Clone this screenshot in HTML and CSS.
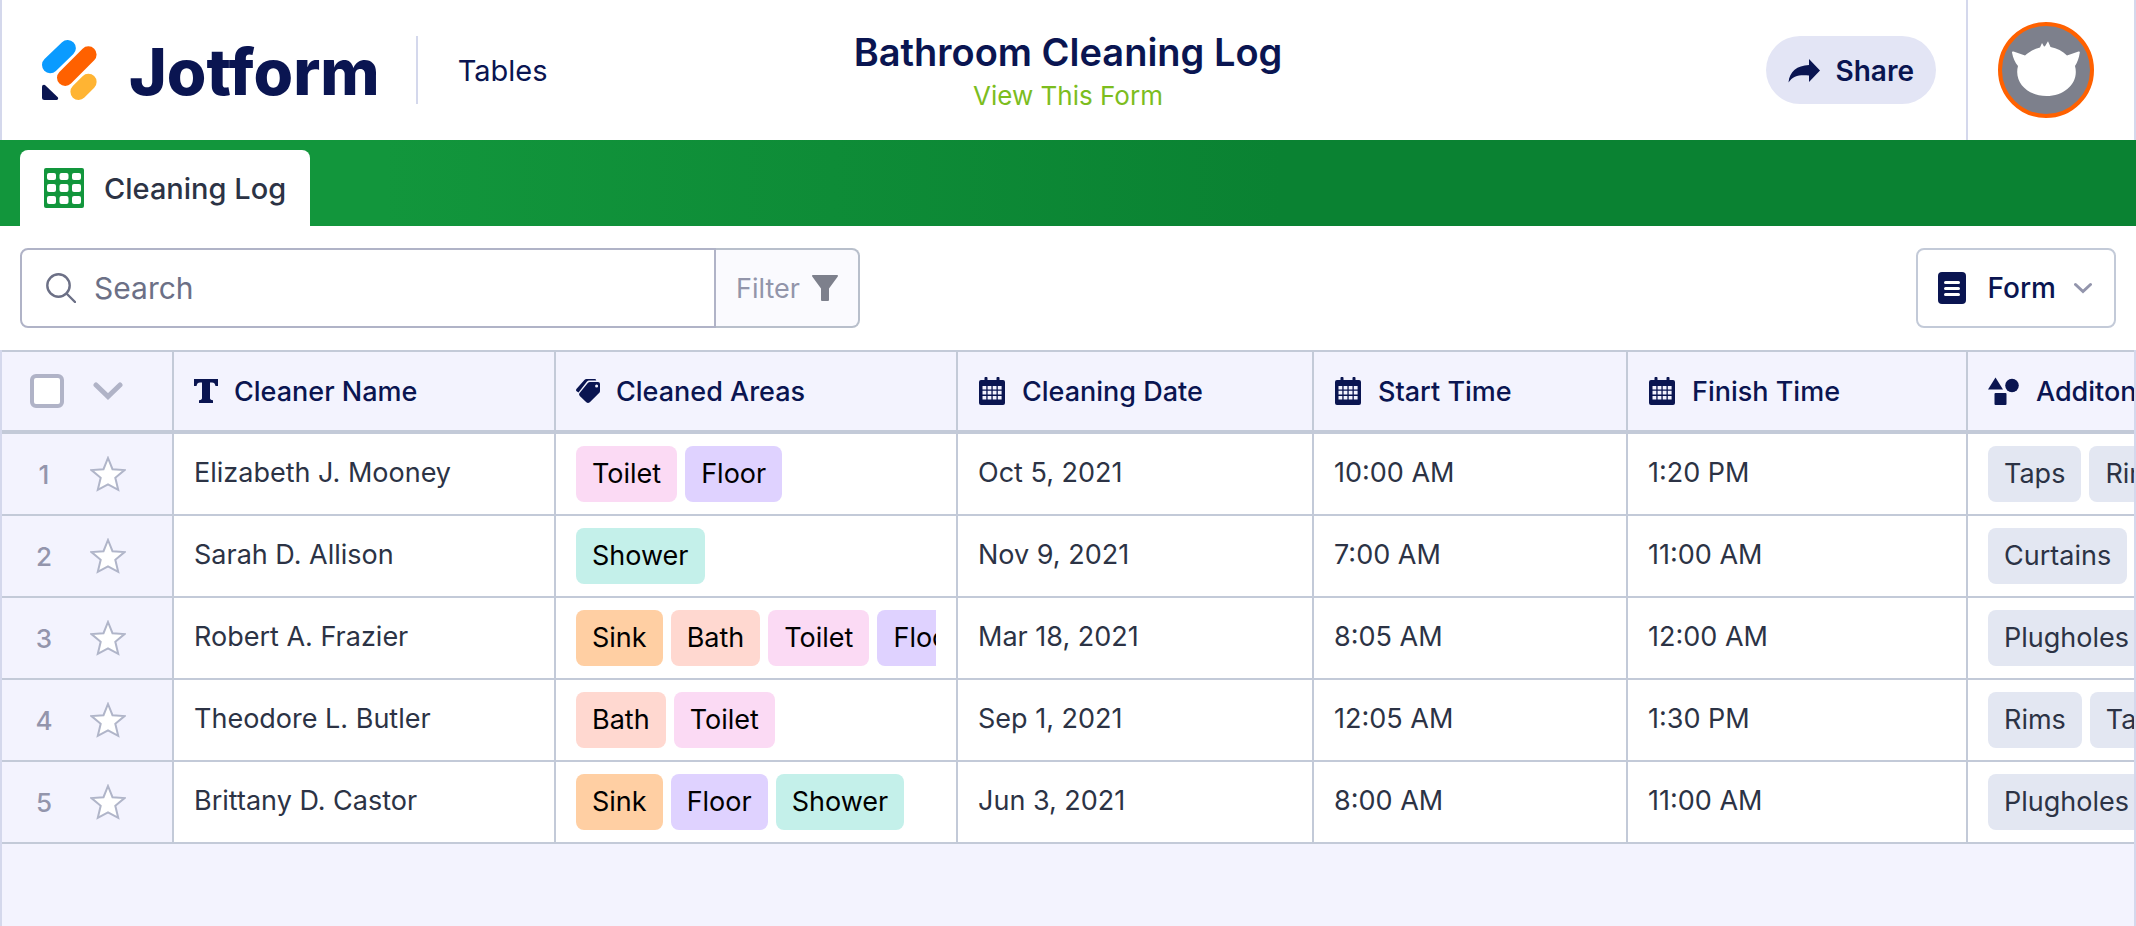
FILE: index.html
```
<!DOCTYPE html>
<html lang="en">
<head>
<meta charset="utf-8">
<meta name="viewport" content="width=device-width, initial-scale=1">
<title>Bathroom Cleaning Log</title>
<link rel="stylesheet" href="styles.css">
</head>
<body>
<svg class="sprite" aria-hidden="true">
  <symbol id="star" viewBox="0 0 36 36"><path d="M18 2l4.500 11.200 12 .9-9.200 7.700 2.900 12L18 28.300 7.800 33.800l2.900-12L1.500 14.100l12-.9z" fill="#fff" stroke="#b0b5c9" stroke-width="2"/></symbol>
  <symbol id="calendar" viewBox="0 0 26 28"><path fill="currentColor" fill-rule="evenodd" d="M5.500 1.200a1.200 1.200 0 0 1 3 0V3h9V1.200a1.200 1.200 0 0 1 3 0V3H24a2 2 0 0 1 2 2v21a2 2 0 0 1-2 2H2a2 2 0 0 1-2-2V5a2 2 0 0 1 2-2h3.500zM3.500 9v3.400h3.800V9zm5.100 0v3.400h3.800V9zm5.100 0v3.400h3.800V9zm5.100 0v3.400h3.800V9zM3.500 13.800v3.800h3.800v-3.800zm5.100 0v3.800h3.800v-3.800zm5.100 0v3.800h3.800v-3.800zm5.100 0v3.800h3.800v-3.800zM3.500 19v3.600h3.800V19zm5.100 0v3.600h3.800V19zm5.100 0v3.600h3.800V19zm5.100 0v3.600h3.800V19z"/></symbol>
</svg>

<header class="topbar">
  <div class="brand">
    <a class="logo" href="#">
      <svg class="logo-mark" viewBox="42 40 55 60" aria-hidden="true">
        <g stroke-width="16.400" stroke-linecap="round">
          <path d="M50.200 65 67.700 48.200" stroke="#0a9bff"/>
          <path d="M65.200 77.800 88.400 54.500" stroke="#ff6100"/>
          <path d="M78.600 91.800 88.400 81.900" stroke="#ffb433"/>
        </g>
        <path d="M42 87c0-2 2-3 3.500-1.600l12 11.600c1.400 1.400.4 3-1.500 3H44.500A2.500 2.500 0 0 1 42 97.500z" fill="#0a1551"/>
      </svg>
      <span class="logo-text">Jotform</span>
    </a>
    <span class="product">Tables</span>
  </div>
  <div class="heading">
    <h1 class="title">Bathroom Cleaning Log</h1>
    <a class="view-form" href="#">View This Form</a>
  </div>
  <div class="account">
    <button class="share" type="button">
      <svg class="share-icon" viewBox="0 0 32 24" aria-hidden="true"><path d="M21 0l11 11.500L21 23v-6.500C12 15.500 5 16.500.500 23.500 1.500 12.500 9 6.500 21 6z" fill="currentColor"/></svg>
      Share
    </button>
    <button class="profile" type="button" aria-label="Account">
      <svg class="avatar" viewBox="0 0 96 96" aria-hidden="true">
        <circle cx="48" cy="48" r="46" fill="#7d808c" stroke="#ff6100" stroke-width="4"/>
        <path d="M14 30.500c0-.8.700-1.200 1.500-.9L27 33.500c4.500-4 9.500-7 15-8l2-4.500 2 3.500 1-.3 3-5 2.500 5.700c6.500 1.100 12 4 16.500 8.600l11.500-4c1-.3 1.500.2 1.300 1.100-.8 5.400-2.500 10-4.800 13.400.6 2 .8 4 .8 6C77.800 63.500 65 74 48.500 74S19.200 63.500 19.200 50c0-2 .2-4 .8-6-3-3.500-5-8-6-13.500z" fill="#fff"/>
      </svg>
    </button>
  </div>
</header>

<nav class="tabs">
  <a class="tab" href="#">
    <svg class="tab-icon" viewBox="0 0 40 40" aria-hidden="true">
      <rect width="40" height="40" rx="2" fill="#12963c"/>
      <g fill="#fff">
        <rect x="3" y="5" width="9" height="7" rx="2"/><rect x="15.500" y="5" width="9" height="7" rx="2"/><rect x="28" y="5" width="9" height="7" rx="2"/>
        <rect x="3" y="16" width="9" height="8" rx="2"/><rect x="15.500" y="16" width="9" height="8" rx="2"/><rect x="28" y="16" width="9" height="8" rx="2"/>
        <rect x="3" y="28" width="9" height="8" rx="2"/><rect x="15.500" y="28" width="9" height="8" rx="2"/><rect x="28" y="28" width="9" height="8" rx="2"/>
      </g>
    </svg>
    Cleaning Log
  </a>
</nav>

<main class="sheet">
  <div class="toolbar">
    <div class="search-group">
      <label class="search">
        <svg class="search-icon" viewBox="0 0 30 30" fill="none" stroke="currentColor" stroke-width="2.400" aria-hidden="true"><circle cx="12.500" cy="12.500" r="11.200"/><path d="M20.500 20.500l8.500 8.500" stroke-linecap="round"/></svg>
        <input class="search-input" type="text" placeholder="Search" aria-label="Search">
      </label>
      <button class="filter" type="button">
        Filter
        <svg class="filter-icon" viewBox="0 0 26 26" aria-hidden="true"><path d="M.800 0h24.400c.7 0 1 .8.600 1.400L17 13.500V25a1 1 0 0 1-1 1h-6a1 1 0 0 1-1-1V13.500L.2 1.400C-.2.800.100 0 .800 0z" fill="#7d808c"/></svg>
      </button>
    </div>
    <button class="form-button" type="button">
      <svg class="form-icon" viewBox="0 0 28 32" aria-hidden="true"><rect width="28" height="32" rx="4" fill="#0a1551"/><path d="M7.500 10.500h13M7.500 16.500h13M7.500 22.500h13" stroke="#fff" stroke-width="3" stroke-linecap="round"/></svg>
      Form
      <svg class="caret" viewBox="0 0 18 12" fill="none" aria-hidden="true"><path d="M1.500 2.500l7.500 7 7.500-7" stroke="#9395ac" stroke-width="3" stroke-linecap="round"/></svg>
    </button>
  </div>

  <div class="table-wrap">
    <table class="grid">
      <colgroup>
        <col class="col-index"><col class="col-name"><col class="col-areas"><col class="col-date"><col class="col-start"><col class="col-finish"><col class="col-extra">
      </colgroup>
      <thead>
        <tr>
          <th scope="col" class="index">
            <div class="index-row">
              <input class="check" type="checkbox" aria-label="Select all rows">
              <svg class="chevron" viewBox="0 0 30 18" fill="none" aria-hidden="true"><path d="M3 3l12 11.500L27 3" stroke="#b0b3c7" stroke-width="5" stroke-linecap="round" stroke-linejoin="miter"/></svg>
            </div>
          </th>
          <th scope="col"><div class="head"><svg class="icon-24" viewBox="0 0 24 24" aria-hidden="true"><path d="M0 0h24v7h-2.500C21 4.500 20 3.500 18 3.500h-2V19c0 1.500.8 2 3 2.200V24H5v-2.800C7.200 21 8 20.500 8 19V3.500H6C4 3.500 3 4.500 2.500 7H0z" fill="currentColor"/></svg>Cleaner Name</div></th>
          <th scope="col"><div class="head"><svg class="icon-24" viewBox="0 0 24 24" fill="currentColor" aria-hidden="true"><path d="M10.500 0h8.300c.8 0 1.300.5 1.500 1.600h-6.500c-1.400 0-2.300.4-3.200 1.400L2.500 13.500.6 12.300c-.8-.8-.8-1.800 0-2.600L8.400.9C9 .300 9.700 0 10.500 0z"/><path fill-rule="evenodd" d="M14 2.900h8a2 2 0 0 1 2 2v7c0 .9-.3 1.500-.9 2.100l-9.300 9.200c-1.200 1-2.400 1-3.500 0L3.800 17c-1-1.100-1-2.200 0-3.300l8-9.800c.6-.7 1.300-1 2.200-1zM20.600 5.500a1.500 1.500 0 1 0 0 3 1.500 1.500 0 0 0 0-3z"/></svg>Cleaned Areas</div></th>
          <th scope="col"><div class="head"><svg class="icon-28" viewBox="0 0 26 28" aria-hidden="true"><use href="#calendar"/></svg>Cleaning Date</div></th>
          <th scope="col"><div class="head"><svg class="icon-28" viewBox="0 0 26 28" aria-hidden="true"><use href="#calendar"/></svg>Start Time</div></th>
          <th scope="col"><div class="head"><svg class="icon-28" viewBox="0 0 26 28" aria-hidden="true"><use href="#calendar"/></svg>Finish Time</div></th>
          <th scope="col"><div class="head"><svg class="icon-32" viewBox="0 0 32 28" fill="currentColor" aria-hidden="true"><path d="M7.500.5L15 12.500H0z"/><circle cx="24" cy="8.500" r="6.800"/><rect x="6.500" y="16" width="12" height="12" rx="1"/></svg>Additonal Areas</div></th>
        </tr>
      </thead>
      <tbody>
        <tr>
          <td class="index"><div class="index-row"><span class="number">1</span><button class="star" type="button" aria-label="Star row 1"><svg class="star-icon"><use href="#star"/></svg></button></div></td>
          <td>Elizabeth J. Mooney</td>
          <td class="tag-cell"><div class="tags"><span class="tag pink">Toilet</span><span class="tag purple">Floor</span></div></td>
          <td>Oct 5, 2021</td><td>10:00 AM</td><td>1:20 PM</td>
          <td class="tag-cell"><div class="tags"><span class="tag plain">Taps</span><span class="tag plain">Rims</span></div></td>
        </tr>
        <tr>
          <td class="index"><div class="index-row"><span class="number">2</span><button class="star" type="button" aria-label="Star row 2"><svg class="star-icon"><use href="#star"/></svg></button></div></td>
          <td>Sarah D. Allison</td>
          <td class="tag-cell"><div class="tags"><span class="tag teal">Shower</span></div></td>
          <td>Nov 9, 2021</td><td>7:00 AM</td><td>11:00 AM</td>
          <td class="tag-cell"><div class="tags"><span class="tag plain">Curtains</span></div></td>
        </tr>
        <tr>
          <td class="index"><div class="index-row"><span class="number">3</span><button class="star" type="button" aria-label="Star row 3"><svg class="star-icon"><use href="#star"/></svg></button></div></td>
          <td>Robert A. Frazier</td>
          <td class="tag-cell"><div class="tags"><span class="tag orange">Sink</span><span class="tag peach">Bath</span><span class="tag pink">Toilet</span><span class="tag purple">Floor</span></div></td>
          <td>Mar 18, 2021</td><td>8:05 AM</td><td>12:00 AM</td>
          <td class="tag-cell"><div class="tags"><span class="tag plain">Plugholes</span></div></td>
        </tr>
        <tr>
          <td class="index"><div class="index-row"><span class="number">4</span><button class="star" type="button" aria-label="Star row 4"><svg class="star-icon"><use href="#star"/></svg></button></div></td>
          <td>Theodore L. Butler</td>
          <td class="tag-cell"><div class="tags"><span class="tag peach">Bath</span><span class="tag pink">Toilet</span></div></td>
          <td>Sep 1, 2021</td><td>12:05 AM</td><td>1:30 PM</td>
          <td class="tag-cell"><div class="tags"><span class="tag plain">Rims</span><span class="tag plain">Taps</span></div></td>
        </tr>
        <tr>
          <td class="index"><div class="index-row"><span class="number">5</span><button class="star" type="button" aria-label="Star row 5"><svg class="star-icon"><use href="#star"/></svg></button></div></td>
          <td>Brittany D. Castor</td>
          <td class="tag-cell"><div class="tags"><span class="tag orange">Sink</span><span class="tag purple">Floor</span><span class="tag teal">Shower</span></div></td>
          <td>Jun 3, 2021</td><td>8:00 AM</td><td>11:00 AM</td>
          <td class="tag-cell"><div class="tags"><span class="tag plain">Plugholes</span></div></td>
        </tr>
      </tbody>
    </table>
  </div>
</main>
</body>
</html>
```
FILE: styles.css
```
:root {
  --navy: #0a1551;
  --ink: #2c3345;
  --line: #c3cad8;
  --edge: #d4d8ec;
  --pale: #f3f3fe;
}

* {
  box-sizing: border-box;
}

body {
  margin: 0;
  min-height: 100vh;
  display: flex;
  flex-direction: column;
  background: #fff;
  color: var(--ink);
  font-family: Inter, "Liberation Sans", sans-serif;
  font-size: 27px;
}

button {
  font: inherit;
  margin: 0;
  border: 0;
  background: none;
  cursor: pointer;
}

a {
  color: inherit;
  text-decoration: none;
}

svg {
  display: block;
  flex: none;
}

.sprite {
  display: none;
}

/* Top bar */
.topbar {
  display: grid;
  grid-template-columns: 1fr auto 1fr;
  height: 140px;
  border: solid var(--edge);
  border-width: 0 2px;
  color: var(--navy);
}

.brand {
  display: flex;
  align-items: center;
  padding-left: 40px;
}

.logo {
  display: flex;
  align-items: center;
  gap: 32px;
}

.logo-mark {
  width: 55px;
  height: 60px;
}

.logo-text {
  padding-top: 4px;
  font-size: 64px;
  line-height: 68px;
  font-weight: 800;
}

.product {
  margin-left: 36px;
  padding: 2px 0 0 40px;
  border-left: 2px solid var(--edge);
  font-size: 29px;
  line-height: 66px;
}

.heading {
  display: flex;
  flex-direction: column;
  align-items: center;
  justify-content: center;
  padding-top: 4px;
}

.title {
  margin: 0;
  font-size: 38px;
  line-height: 48px;
  font-weight: 600;
}

.view-form {
  color: #7cbd1e;
  font-size: 26px;
  line-height: 40px;
}

.account {
  display: flex;
  justify-content: flex-end;
  align-items: center;
  gap: 30px;
}

.share {
  display: flex;
  align-items: center;
  gap: 16px;
  height: 68px;
  padding: 2px 22px 0;
  border-radius: 34px;
  background: #e3e5f5;
  color: var(--navy);
  font-size: 28px;
  font-weight: 600;
}

.share-icon {
  width: 32px;
  height: 24px;
}

.profile {
  height: 100%;
  padding: 0 40px 0 30px;
  border-left: 2px solid var(--edge);
}

.avatar {
  width: 96px;
  height: 96px;
}

/* Tab strip */
.tabs {
  display: flex;
  height: 86px;
  padding: 10px 20px 0;
  background: linear-gradient(90deg, #12963c 18%, #0a8232 60%);
}

.tab {
  display: flex;
  align-items: center;
  gap: 20px;
  padding: 0 24px;
  border-radius: 8px 8px 0 0;
  background: #fff;
  font-size: 29px;
  font-weight: 500;
}

.tab-icon {
  width: 40px;
  height: 40px;
}

/* Sheet */
.sheet {
  flex: 1;
  display: flex;
  flex-direction: column;
}

.toolbar {
  display: flex;
  justify-content: space-between;
  padding: 22px 20px;
}

.search-group {
  display: flex;
  width: 840px;
  height: 80px;
}

.search {
  flex: 1;
  display: flex;
  align-items: center;
  gap: 18px;
  padding-left: 24px;
  border: 2px solid #b0b3c7;
  border-radius: 8px 0 0 8px;
  color: #6c7086;
}

.search-icon {
  width: 30px;
  height: 30px;
}

.search-input {
  flex: 1;
  min-width: 0;
  height: 100%;
  padding: 0;
  border: 0;
  outline: 0;
  background: none;
  color: var(--ink);
  font: inherit;
  font-size: 30px;
}

.search-input::placeholder {
  color: #6c7086;
  opacity: 1;
}

.filter {
  display: flex;
  align-items: center;
  gap: 12px;
  padding: 0 20px;
  border: 2px solid #b8bfcb;
  border-left: 0;
  border-radius: 0 8px 8px 0;
  background: #fafafe;
  color: #9295aa;
}

.filter-icon {
  width: 26px;
  height: 26px;
}

.form-button {
  display: flex;
  align-items: center;
  padding: 0 22px 0 20px;
  border: 2px solid var(--line);
  border-radius: 8px;
  color: var(--navy);
  font-size: 28px;
  font-weight: 500;
}

.form-icon {
  width: 28px;
  height: 32px;
  margin-right: 22px;
}

.caret {
  width: 18px;
  height: 12px;
  margin-left: 18px;
}

.table-wrap {
  flex: 1;
  overflow: hidden;
  border: solid var(--edge);
  border-width: 0 2px;
  background: var(--pale);
}

.grid {
  width: 2368px;
  table-layout: fixed;
  border-collapse: separate;
  border-spacing: 0;
  border-top: 2px solid var(--line);
}

.col-index {
  width: 172px;
}

.col-name {
  width: 382px;
}

.col-areas {
  width: 402px;
}

.col-date {
  width: 356px;
}

.col-start {
  width: 314px;
}

.col-finish {
  width: 340px;
}

.col-extra {
  width: 402px;
}

.grid th,
.grid td {
  padding: 0 20px;
  border-right: 2px solid var(--line);
  text-align: left;
  white-space: nowrap;
}

.grid th {
  height: 82px;
  border-bottom: 4px solid var(--line);
  background: var(--pale);
  color: var(--navy);
  font-weight: 500;
}

.grid td {
  height: 82px;
  padding-bottom: 4px;
  border-bottom: 2px solid var(--line);
  background: #fff;
}

.grid .tag-cell {
  padding-bottom: 0;
}

.grid .index {
  padding: 0 28px;
  background: var(--pale);
}

.index-row {
  display: grid;
  grid-template-columns: 34px 36px;
  gap: 26px;
  align-items: center;
  justify-items: center;
}

.check {
  appearance: none;
  width: 34px;
  height: 34px;
  margin: 0;
  border: 4px solid #b0b3c7;
  border-radius: 6px;
  background: #fff;
}

.check:checked {
  background: var(--navy);
}

.chevron {
  width: 30px;
  height: 18px;
}

.number {
  justify-self: start;
  width: 28px;
  color: #9395ac;
  font-size: 26px;
  font-weight: 500;
  text-align: center;
}

.star {
  padding: 0;
}

.star-icon {
  width: 36px;
  height: 36px;
}

.head {
  display: flex;
  align-items: center;
  gap: 16px;
}

.icon-24 {
  width: 24px;
  height: 24px;
}

.icon-28 {
  width: 28px;
  height: 28px;
}

.icon-32 {
  width: 32px;
  height: 28px;
}

.tags {
  display: flex;
  gap: 8px;
  overflow: hidden;
}

.tag {
  flex: none;
  padding: 0 16px;
  border-radius: 8px;
  color: #000;
  line-height: 56px;
}

.pink {
  background: #fbdaf4;
}

.purple {
  background: #dfd2ff;
}

.teal {
  background: #c4f0ea;
}

.orange {
  background: #ffcfa3;
}

.peach {
  background: #ffd8d0;
}

.plain {
  background: #e3e7f2;
  color: var(--ink);
}
```
